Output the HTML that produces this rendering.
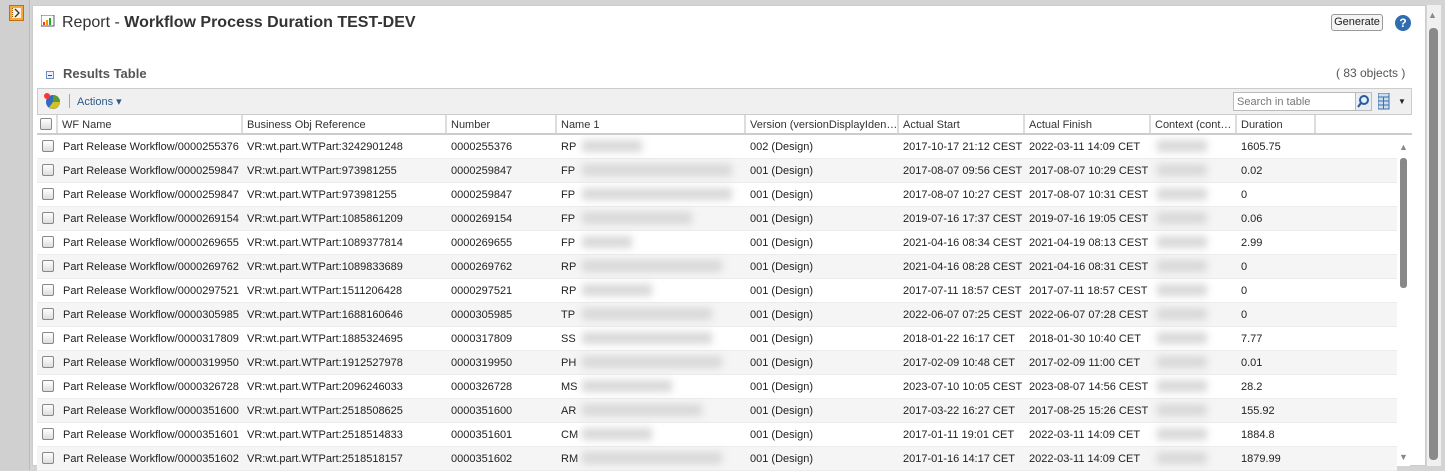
<!DOCTYPE html>
<html><head><style>
*{box-sizing:border-box;margin:0;padding:0}
body{width:1445px;height:470px;background:#d4d4d4;font-family:"Liberation Sans",Arial,sans-serif;position:relative;overflow:hidden;font-size:11px;color:#222}
.side{position:absolute;left:0;top:0;width:30px;height:470px;background:#d0d0d0;border-right:1px solid #bbb}
.tog{position:absolute;left:9px;top:5px;width:15px;height:16px;background:#f5a840;border:1px solid #c07010}
.main{position:absolute;left:32px;top:5px;width:1394px;height:461px;background:#fff;border:1px solid #ccc}
.title{position:absolute;left:62px;top:14px;font-size:16px;color:#333}
.title b{font-weight:bold}
.gen{position:absolute;left:1331px;top:14px;width:52px;height:17px;border:1px solid #999;border-radius:3px;background:#f4f4f4;font-size:11px;text-align:center;line-height:15px}
.help{position:absolute;left:1395px;top:15px;width:16px;height:16px;border-radius:50%;background:#2f6cb0;color:#fff;font-weight:bold;font-size:12px;text-align:center;line-height:16px}
.rt{position:absolute;left:63px;top:66px;font-size:13px;font-weight:bold;color:#555}
.min{position:absolute;left:46px;top:71px;width:8px;height:8px;border:1px solid #6a8fb8;background:#eef}
.min:after{content:"";position:absolute;left:1px;top:3px;width:4px;height:1px;background:#356}
.cnt{position:absolute;left:1336px;top:66px;font-size:12px;color:#555}
.tb{position:absolute;left:37px;top:88px;width:1375px;height:27px;background:#f0f0f0;border:1px solid #ccc}
.act{position:absolute;left:77px;top:95px;color:#2a5a8a;font-size:11px}
.search{position:absolute;left:1233px;top:92px;width:124px;height:19px;border:1px solid #bbb;background:#fff;color:#777;font-size:11px;padding:3px 3px}
.sbtn{position:absolute;left:1355px;top:92px;width:17px;height:19px;border:1px solid #bbb;background:#e8eef6}
.hdr{position:absolute;left:37px;top:115px;width:1375px;height:20px;background:#fff;border-bottom:2px solid #ccc}
.h{position:absolute;top:0;height:18px;border-right:2px solid #ddd;padding:4px 4px;white-space:nowrap;font-size:11px;color:#333;overflow:hidden}
.row{position:absolute;left:37px;width:1360px;height:24px;border-bottom:1px solid #ececec}
.row.g{background:#f5f5f5}
.c{position:absolute;top:6px;white-space:nowrap;font-size:11px;color:#222}
.cb{position:absolute;left:5px;top:5px;width:12px;height:12px;border:1px solid #888;background:linear-gradient(#fff,#ddd);border-radius:2px}
.bl{position:absolute;top:5px;height:12px;background:#d8d8d8;filter:blur(4px)}
.vs{position:absolute;left:1397px;top:135px;width:13px;height:331px;background:#fff}
.vsth{position:absolute;left:1400px;top:158px;width:7px;height:130px;background:#888;border-radius:3px}
.os{position:absolute;left:1427px;top:5px;width:14px;height:461px;background:#f0f0f0}
.osth{position:absolute;left:1429px;top:28px;width:9px;height:432px;background:#8a8a8a;border-radius:4px}
</style></head><body>
<div class="side"></div><div class="tog"><svg width="13" height="14" style="position:absolute;left:0;top:0"><rect x="2" y="2" width="9" height="10" fill="#fff4e0"/><line x1="2.5" y1="2" x2="2.5" y2="12" stroke="#a05000" stroke-dasharray="1 1"/><path d="M5 3 L9 7 L5 11" fill="none" stroke="#333" stroke-width="1.3"/></svg></div>
<div class="main"></div>
<svg style="position:absolute;left:41px;top:15px" width="14" height="12"><rect x="0" y="0" width="13" height="11" fill="#fff" stroke="#556"/><rect x="2" y="7" width="2" height="3" fill="#e33"/><rect x="5" y="5" width="2" height="5" fill="#e90"/><rect x="8" y="3" width="2" height="7" fill="#2a2"/></svg>
<div class="title">Report - <b>Workflow Process Duration TEST-DEV</b></div>
<div class="gen">Generate</div><div class="help">?</div>
<div class="min"></div><div class="rt">Results Table</div>
<div class="cnt">( 83 objects )</div>
<div class="tb"></div>
<svg style="position:absolute;left:43px;top:92px" width="20" height="18"><circle cx="10" cy="10" r="7" fill="#2f6cc0"/><path d="M10 10 L17 10 A7 7 0 0 1 6 15.5Z" fill="#d8c020"/><path d="M10 10 L10 3 A7 7 0 0 1 17 10Z" fill="#5a9a30"/><circle cx="4" cy="4" r="3" fill="#f33"/></svg>
<div style="position:absolute;left:69px;top:94px;width:1px;height:14px;background:#9ab"></div>
<div class="act">Actions ▾</div>
<div class="search">Search in table</div><div class="sbtn"><svg width="15" height="17"><circle cx="8" cy="7" r="4" fill="none" stroke="#2a5a9a" stroke-width="2"/><line x1="5" y1="10" x2="2" y2="14" stroke="#2a5a9a" stroke-width="2"/></svg></div>
<svg style="position:absolute;left:1378px;top:93px" width="12" height="17"><rect x="0" y="0" width="11" height="16" fill="#cde" stroke="#3a6fb0"/><line x1="0" y1="4" x2="11" y2="4" stroke="#3a6fb0"/><line x1="0" y1="8" x2="11" y2="8" stroke="#3a6fb0"/><line x1="0" y1="12" x2="11" y2="12" stroke="#3a6fb0"/><line x1="5.5" y1="4" x2="5.5" y2="16" stroke="#3a6fb0"/></svg>
<div style="position:absolute;left:1398px;top:97px;font-size:8px">▼</div>
<div class="hdr">
<div class="h" style="left:0;width:21px"><div class="cb" style="left:3px;top:3px"></div></div>
<div class="h" style="left:21px;width:185px">WF Name</div>
<div class="h" style="left:206px;width:204px">Business Obj Reference</div>
<div class="h" style="left:410px;width:110px">Number</div>
<div class="h" style="left:520px;width:189px">Name 1</div>
<div class="h" style="left:709px;width:153px">Version (versionDisplayIden…</div>
<div class="h" style="left:862px;width:126px">Actual Start</div>
<div class="h" style="left:988px;width:126px">Actual Finish</div>
<div class="h" style="left:1114px;width:86px">Context (cont…</div>
<div class="h" style="left:1200px;width:79px">Duration</div>
</div>
<div id="rows"></div>
<div class="vs"></div><div class="vsth"></div>
<div style="position:absolute;left:1399px;top:142px;font-size:9px;color:#888">▲</div>
<div style="position:absolute;left:1399px;top:452px;font-size:9px;color:#888">▼</div>
<div class="os"></div><div class="osth"></div>
<div style="position:absolute;left:1428px;top:10px;font-size:9px;color:#888">▲</div>
<script>
var d=[["0000255376","3242901248","RP","002","2017-10-17 21:12 CEST","2022-03-11 14:09 CET","1605.75",60],
["0000259847","973981255","FP","001","2017-08-07 09:56 CEST","2017-08-07 10:29 CEST","0.02",150],
["0000259847","973981255","FP","001","2017-08-07 10:27 CEST","2017-08-07 10:31 CEST","0",150],
["0000269154","1085861209","FP","001","2019-07-16 17:37 CEST","2019-07-16 19:05 CEST","0.06",110],
["0000269655","1089377814","FP","001","2021-04-16 08:34 CEST","2021-04-19 08:13 CEST","2.99",50],
["0000269762","1089833689","RP","001","2021-04-16 08:28 CEST","2021-04-16 08:31 CEST","0",140],
["0000297521","1511206428","RP","001","2017-07-11 18:57 CEST","2017-07-11 18:57 CEST","0",70],
["0000305985","1688160646","TP","001","2022-06-07 07:25 CEST","2022-06-07 07:28 CEST","0",130],
["0000317809","1885324695","SS","001","2018-01-22 16:17 CET","2018-01-30 10:40 CET","7.77",130],
["0000319950","1912527978","PH","001","2017-02-09 10:48 CET","2017-02-09 11:00 CET","0.01",140],
["0000326728","2096246033","MS","001","2023-07-10 10:05 CEST","2023-08-07 14:56 CEST","28.2",90],
["0000351600","2518508625","AR","001","2017-03-22 16:27 CET","2017-08-25 15:26 CEST","155.92",120],
["0000351601","2518514833","CM","001","2017-01-11 19:01 CET","2022-03-11 14:09 CET","1884.8",70],
["0000351602","2518518157","RM","001","2017-01-16 14:17 CET","2022-03-11 14:09 CET","1879.99",140]];
var h="";d.forEach(function(r,i){var t=135+i*24;h+='<div class="row'+(i%2?' g':'')+'" style="top:'+t+'px"><div class="cb"></div>'+
'<div class="c" style="left:26px">Part Release Workflow/'+r[0]+'</div>'+
'<div class="c" style="left:210px">VR:wt.part.WTPart:'+r[1]+'</div>'+
'<div class="c" style="left:414px">'+r[0]+'</div>'+
'<div class="c" style="left:524px">'+r[2]+'</div><div class="bl" style="left:545px;width:'+r[7]+'px"></div>'+
'<div class="c" style="left:713px">'+r[3]+' (Design)</div>'+
'<div class="c" style="left:866px">'+r[4]+'</div>'+
'<div class="c" style="left:992px">'+r[5]+'</div>'+
'<div class="bl" style="left:1120px;width:50px"></div>'+
'<div class="c" style="left:1204px">'+r[6]+'</div></div>';});
document.getElementById("rows").innerHTML=h;
</script>
</body></html>
